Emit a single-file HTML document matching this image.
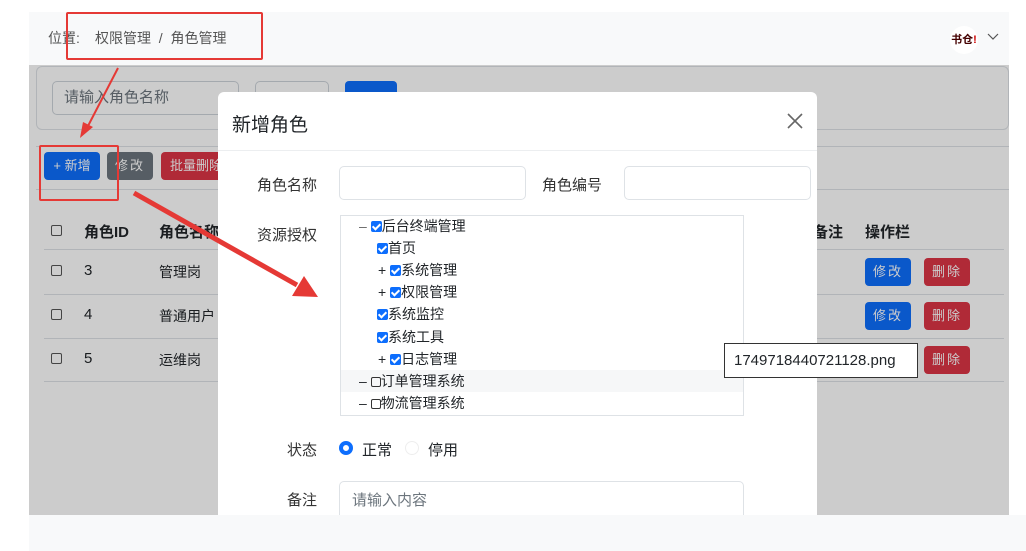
<!DOCTYPE html>
<html><head><meta charset="utf-8"><style>
*{box-sizing:border-box;margin:0;padding:0}
body{width:1026px;height:551px;background:#fff;position:relative;overflow:hidden;font-family:"Liberation Sans","Noto Sans CJK SC",sans-serif;color:#212529;font-size:14px}
.a{position:absolute}
.btn{position:absolute;color:#fff;border-radius:4px;font-size:13px;text-align:center;line-height:28px;letter-spacing:2px}
.cb{position:absolute;width:11px;height:11px;border:1px solid #555;border-radius:2px;background:#fff}
.ck{display:inline-block;width:11px;height:11px;background:#0d6efd;border-radius:2px;vertical-align:-1px;position:relative}
.ck:after{content:"";position:absolute;left:3px;top:1px;width:3px;height:6px;border:solid #fff;border-width:0 2px 2px 0;transform:rotate(45deg)}
.uk{display:inline-block;width:10px;height:10px;border:1px solid #333;border-radius:2px;vertical-align:-1px}
.tr{position:absolute;font-size:14px;line-height:22px;height:22px;width:402px}
.line{position:absolute;height:1px;background:#dee2e6}
</style></head><body>
<div class="a" style="left:29px;top:12px;width:980px;height:53px;background:#f8f9fa"></div>
<div class="a" style="left:48px;top:28px;color:#555">位置:</div>
<div class="a" style="left:95px;top:28px;color:#555">权限管理 &nbsp;/&nbsp; 角色管理</div>
<div class="a" style="left:950px;top:26px;width:28px;height:28px;border-radius:50%;background:#fff;font-size:11px;font-weight:bold;line-height:28px;text-align:center;color:#400">书仓<span style="color:#c00">!</span></div>
<svg class="a" style="left:987px;top:33px" width="12" height="8"><path d="M1 1 L6 6 L11 1" fill="none" stroke="#555" stroke-width="1.2"/></svg>
<div class="a" style="left:29px;top:65px;width:980px;height:450px;background:#fff"></div>
<div class="a" style="left:36px;top:66px;width:973px;height:64px;border:1px solid #dee2e6;border-radius:6px"></div>
<div class="a" style="left:52px;top:81px;width:187px;height:34px;border:1px solid #ced4da;border-radius:5px;color:#6c757d;font-size:15px;line-height:32px;padding-left:11px">请输入角色名称</div>
<div class="a" style="left:255px;top:81px;width:74px;height:34px;border:1px solid #ced4da;border-radius:5px"></div>
<div class="btn" style="left:345px;top:81px;width:52px;height:34px;background:#0d6efd"></div>
<div class="a" style="left:36px;top:146px;width:973px;height:44px;border-top:1px solid #dee2e6;border-bottom:1px solid #dee2e6"></div>
<div class="btn" style="left:44px;top:152px;width:56px;background:#0d6efd;letter-spacing:0">+ 新增</div>
<div class="btn" style="left:107px;top:152px;width:46px;background:#6c757d">修改</div>
<div class="btn" style="left:161px;top:152px;width:70px;background:#dc3545;letter-spacing:0">批量删除</div>
<div class="cb" style="left:51px;top:225px"></div>
<div class="a" style="left:84px;top:221px;font-weight:bold;font-size:15px">角色ID</div>
<div class="a" style="left:159px;top:221px;font-weight:bold;font-size:15px">角色名称</div>
<div class="a" style="left:813px;top:221px;font-weight:bold;font-size:15px">备注</div>
<div class="a" style="left:865px;top:221px;font-weight:bold;font-size:15px">操作栏</div>
<div class="line" style="left:44px;top:249px;width:960px"></div>
<div class="line" style="left:44px;top:294px;width:960px"></div>
<div class="line" style="left:44px;top:338px;width:960px"></div>
<div class="line" style="left:44px;top:381px;width:960px"></div>
<div class="cb" style="left:51px;top:265px"></div><div class="a" style="left:84px;top:262px;font-size:15px">3</div><div class="a" style="left:159px;top:262px">管理岗</div>
<div class="cb" style="left:51px;top:309px"></div><div class="a" style="left:84px;top:306px;font-size:15px">4</div><div class="a" style="left:159px;top:306px">普通用户</div>
<div class="cb" style="left:51px;top:353px"></div><div class="a" style="left:84px;top:350px;font-size:15px">5</div><div class="a" style="left:159px;top:350px">运维岗</div>
<div class="btn" style="left:865px;top:258px;width:46px;background:#0d6efd">修改</div>
<div class="btn" style="left:924px;top:258px;width:46px;background:#dc3545">删除</div>
<div class="btn" style="left:865px;top:302px;width:46px;background:#0d6efd">修改</div>
<div class="btn" style="left:924px;top:302px;width:46px;background:#dc3545">删除</div>
<div class="btn" style="left:924px;top:346px;width:46px;background:#dc3545">删除</div>
<div class="a" style="left:29px;top:65px;width:980px;height:450px;background:rgba(0,0,0,.2)"></div>
<div class="a" style="left:218px;top:92px;width:599px;height:440px;background:#fff;border-radius:6px"></div>
<div class="a" style="left:232px;top:110px;font-size:19px">新增角色</div>
<svg class="a" style="left:787px;top:113px" width="16" height="16"><path d="M1 1L15 15M15 1L1 15" stroke="#666" stroke-width="1.6"/></svg>
<div class="line" style="left:218px;top:150px;width:599px;background:#eceef0"></div>
<div class="a" style="left:257px;top:174px;font-size:15px;color:#333">角色名称</div>
<div class="a" style="left:339px;top:166px;width:187px;height:34px;border:1px solid #dee2e6;border-radius:5px"></div>
<div class="a" style="left:542px;top:174px;font-size:15px;color:#333">角色编号</div>
<div class="a" style="left:624px;top:166px;width:187px;height:34px;border:1px solid #dee2e6;border-radius:5px"></div>
<div class="a" style="left:257px;top:224px;font-size:15px;color:#333">资源授权</div>
<div class="a" style="left:340px;top:215px;width:404px;height:201px;border:1px solid #dee2e6"></div>
<div class="tr" style="left:341px;top:215px;padding-left:18px"><span style="color:#666">–</span> <span class="ck"></span>后台终端管理</div>
<div class="tr" style="left:341px;top:237px;padding-left:36px"><span class="ck"></span>首页</div>
<div class="tr" style="left:341px;top:259px;padding-left:37px">+ <span class="ck"></span>系统管理</div>
<div class="tr" style="left:341px;top:281px;padding-left:37px">+ <span class="ck"></span>权限管理</div>
<div class="tr" style="left:341px;top:303px;padding-left:36px"><span class="ck"></span>系统监控</div>
<div class="tr" style="left:341px;top:326px;padding-left:36px"><span class="ck"></span>系统工具</div>
<div class="tr" style="left:341px;top:348px;padding-left:37px">+ <span class="ck"></span>日志管理</div>
<div class="tr" style="left:341px;top:370px;padding-left:18px;background:#f6f7f8">– <span class="uk"></span>订单管理系统</div>
<div class="tr" style="left:341px;top:392px;padding-left:18px">– <span class="uk"></span>物流管理系统</div>
<div class="a" style="left:287px;top:439px;font-size:15px;color:#333">状态</div>
<div class="a" style="left:339px;top:441px;width:14px;height:14px;border-radius:50%;border:4px solid #0d6efd;background:#fff"></div>
<div class="a" style="left:362px;top:439px;font-size:15px">正常</div>
<div class="a" style="left:405px;top:441px;width:14px;height:14px;border-radius:50%;border:1px solid #eee"></div>
<div class="a" style="left:428px;top:439px;font-size:15px">停用</div>
<div class="a" style="left:287px;top:489px;font-size:15px;color:#333">备注</div>
<div class="a" style="left:339px;top:481px;width:405px;height:60px;border:1px solid #dee2e6;border-radius:5px;color:#6c757d;font-size:15px;padding:7px 12px">请输入内容</div>
<div class="a" style="left:29px;top:515px;width:997px;height:36px;background:#f8f9fa"></div>
<div class="a" style="left:724px;top:343px;width:194px;height:35px;background:#fff;border:1px solid #333;font-size:15px;line-height:33px;padding-left:9px">1749718440721128.png</div>
<div class="a" style="left:66px;top:12px;width:197px;height:48px;border:2px solid #e53935;border-radius:2px"></div>
<div class="a" style="left:39px;top:145px;width:80px;height:56px;border:2px solid #e53935;border-radius:2px"></div>
<svg class="a" style="left:0;top:0" width="1026" height="551">
<path d="M118 68 L88 126" stroke="#e53935" stroke-width="2"/>
<path d="M80 138 L83 122 L93 127 Z" fill="#e53935"/>
<path d="M134 193 L297 285" stroke="#e53935" stroke-width="5"/>
<path d="M318 297 L292 296 L304 276 Z" fill="#e53935"/>
</svg>
</body></html>
